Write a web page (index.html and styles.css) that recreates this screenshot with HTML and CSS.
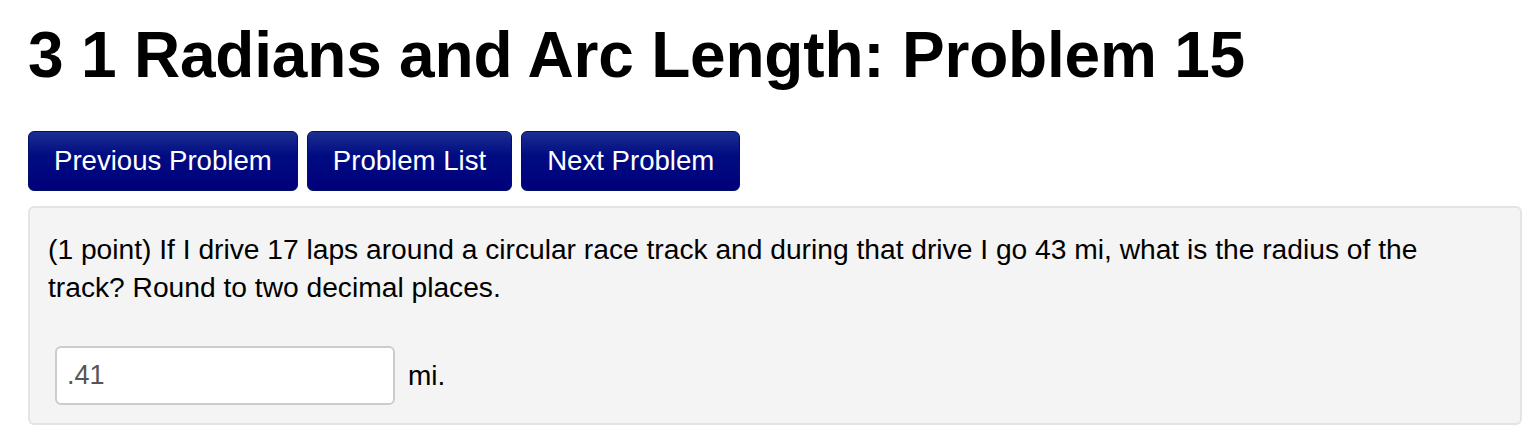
FILE: index.html
```html
<!DOCTYPE html>
<html lang="en">
<head>
    <meta charset="UTF-8">
    <title>3 1 Radians and Arc Length: Problem 15</title>
    <link rel="stylesheet" href="styles.css">
</head>
<body>
    <div id="pageBlock">
        <h1 class="titleStyle">3 1 Radians and Arc Length: Problem 15</h1>
        <div class="navBlock">
            <button class="navButton">Previous Problem</button>
            <button class="navButton">Problem List</button>
            <button class="navButton">Next Problem</button>
        </div>
        <div id="problemBlock">
            <p class="problemText">(1 point) If I drive 17 laps around a circular race track and during that drive I go 43 mi, what is the radius of the track? Round to two decimal places.</p>
            <div class="answerRow">
                <input class="answerInput" type="text" name="answer" value=".41">
                <span class="unitText">mi.</span>
            </div>
        </div>
    </div>
</body>
</html>
```

FILE: styles.css
```css
*{
    margin: 0;
    padding: 0;
    box-sizing: border-box;
}
body{
    font-family: "Liberation Sans", Arial, sans-serif;
    color: #000;
    background-color: #fff;
}
#pageBlock{
    padding: 0 12px 0 28px;
}
.titleStyle{
    font-size: 64px;
    font-weight: bold;
    line-height: 70px;
    padding-top: 20px;
    letter-spacing: -0.2px;
}
.navBlock{
    display: flex;
    gap: 9px;
    margin-top: 41px;
}
.navButton{
    height: 60px;
    padding: 0 25px;
    font-family: "Liberation Sans", Arial, sans-serif;
    font-size: 27.6px;
    color: #fff;
    border: 1px solid #00106a;
    border-radius: 6px;
    background: linear-gradient(to bottom, #1c2e90, #000c82 40%, #00007a);
    cursor: pointer;
}
#problemBlock{
    margin-top: 15px;
    height: 219px;
    background-color: #f4f4f4;
    border: 2px solid #e4e4e4;
    border-radius: 6px;
    padding: 22px 18px 0 18px;
}
.problemText{
    font-size: 28.2px;
    line-height: 38px;
    padding-right: 80px;
}
.answerRow{
    display: flex;
    align-items: center;
    gap: 13px;
    margin-top: 40px;
    padding-left: 7px;
}
.answerInput{
    width: 340px;
    height: 59px;
    padding: 0 10px;
    font-family: "Liberation Sans", Arial, sans-serif;
    font-size: 27px;
    color: #555;
    background-color: #fff;
    border: 2px solid #ccc;
    border-radius: 6px;
}
.unitText{
    font-size: 28px;
}
```
